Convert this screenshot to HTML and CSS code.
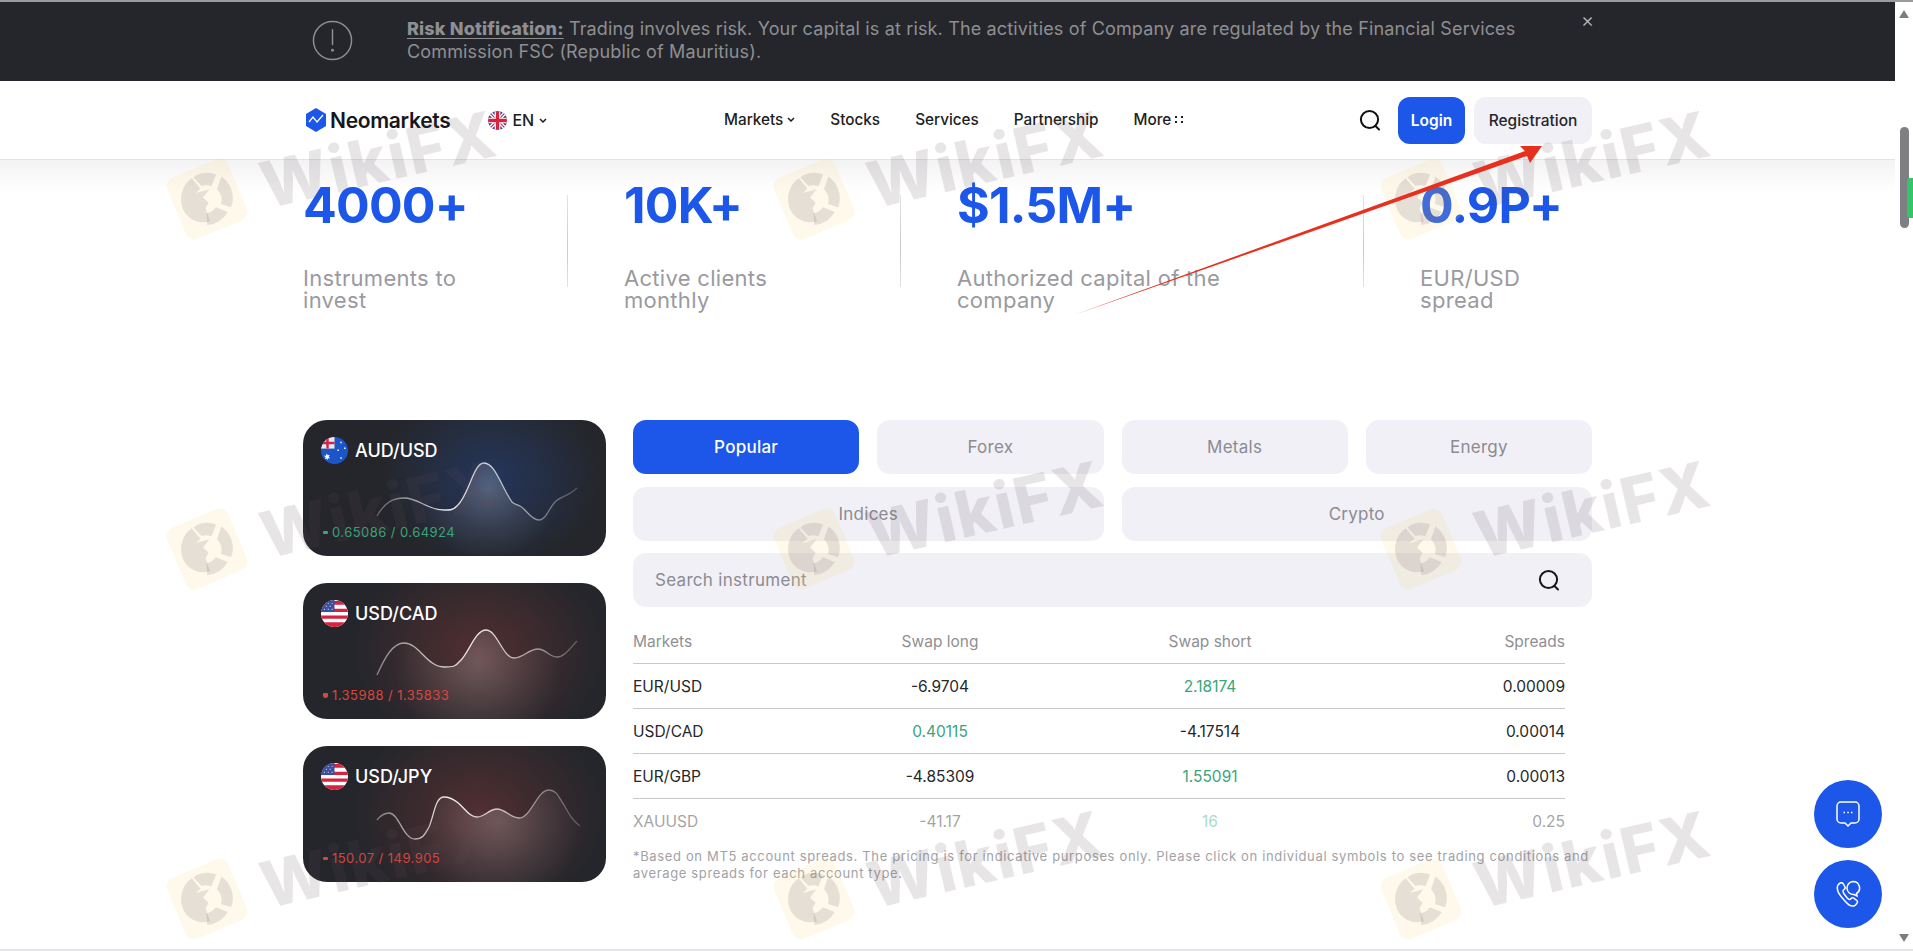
FILE: index.html
```html
<!DOCTYPE html>
<html lang="en">
<head>
<meta charset="utf-8">
<title>Neomarkets</title>
<link rel="stylesheet" href="styles.css">
</head>
<body>
<svg class="defs" width="0" height="0" aria-hidden="true">
  <symbol id="wm-mark" viewBox="0 0 80 80">
    <g transform="rotate(-10 40 40)">
      <rect x="7" y="7" width="66" height="66" rx="9" fill="#f8dc84" opacity=".17"/>
      <path d="M40 14a26 26 0 0 1 18 7l-9 9a14 14 0 0 0-9-4l-4-11zM62 25a26 26 0 0 1-3 32l-8-7a15 15 0 0 0 2-15zM54 60a26 26 0 0 1-24 4l4-11a15 15 0 0 0 11-2z" fill="#6e5f6e" opacity=".17"/>
      <path d="M34 15l4 13 -6 2 14 2 -9 5 3 7-5 4-1 14C22 60 14 50 14 40c0-12 9-23 20-25z" fill="#6e5f6e" opacity=".17"/>
    </g>
  </symbol>
  <symbol id="i-search" viewBox="0 0 22 22">
    <circle cx="10.5" cy="10.5" r="8.6" fill="none" stroke="currentColor" stroke-width="2"/>
    <path d="M16.5 17l3.5 3.5" fill="none" stroke="currentColor" stroke-width="2" stroke-linecap="round"/>
  </symbol>
  <symbol id="flag-us" viewBox="0 0 28 28">
    <rect width="28" height="28" fill="#fff"/>
    <path d="M0 1h28v4H0zM0 9h28v3.500H0zM0 16h28v3.500H0zM0 23h28v5H0z" fill="#d8233f"/>
    <rect width="14" height="12.500" fill="#3c4f9c"/>
    <path d="M3 3h1v1H3zM7 3h1v1H7zM11 3h1v1h-1zM5 6h1v1H5zM9 6h1v1H9zM3 9h1v1H3zM7 9h1v1H7zM11 9h1v1h-1z" fill="#fff"/>
  </symbol>
</svg>

<div class="page">
  <div class="main">
    <section class="banner">
      <div class="banner-inner">
        <svg class="alert-icon" viewBox="0 0 42 42"><circle cx="21" cy="21" r="19.500" fill="none" stroke="#8e8f92" stroke-width="1.500"/><path d="M21 10v15" stroke="#8e8f92" stroke-width="1.500" stroke-linecap="round"/><circle cx="21" cy="31" r="1.500" fill="#8e8f92"/></svg>
        <p class="banner-text"><strong>Risk Notification:</strong> Trading involves risk. Your capital is at risk. The activities of Company are regulated by the Financial Services Commission FSC (Republic of Mauritius).</p>
        <span class="banner-close">×</span>
      </div>
    </section>

    <header class="site-header">
      <div class="header-inner">
        <div class="brand-group">
          <a class="brand">
            <svg class="brand-mark" viewBox="0 0 20 24"><path d="M10 0l10 6v12l-10 6L0 18V6z" fill="#1c57ea"/><path d="M3 14l4-5 4 5 6-7" fill="none" stroke="#fff" stroke-width="1.300"/></svg>
            <span>Neomarkets</span>
          </a>
          <span class="lang">
            <svg class="flag-sm" viewBox="0 0 20 20"><rect width="20" height="20" fill="#2b3f8c"/><path d="M0 0l20 20M20 0L0 20" stroke="#fff" stroke-width="4"/><path d="M0 0l20 20M20 0L0 20" stroke="#d8233f" stroke-width="1.300"/><path d="M10 0v20M0 10h20" stroke="#fff" stroke-width="6"/><path d="M10 0v20M0 10h20" stroke="#d8233f" stroke-width="3.500"/></svg>
            EN
            <svg class="chev" viewBox="0 0 8 5"><path d="M1 1l3 3 3-3" fill="none" stroke="currentColor" stroke-width="1.500"/></svg>
          </span>
        </div>
        <nav class="nav">
          <a>Markets <svg class="chev" viewBox="0 0 8 5"><path d="M1 1l3 3 3-3" fill="none" stroke="currentColor" stroke-width="1.500"/></svg></a>
          <a>Stocks</a>
          <a>Services</a>
          <a>Partnership</a>
          <a>More <svg class="dots" viewBox="0 0 9 9"><path d="M0 1h2v2H0zM0 6h2v2H0zM6 1h2v2H6zM6 6h2v2H6z" fill="currentColor"/></svg></a>
        </nav>
        <div class="header-actions">
          <svg class="header-search"><use href="#i-search"/></svg>
          <button class="btn btn-primary">Login</button>
          <button class="btn btn-soft">Registration</button>
        </div>
      </div>
    </header>

    <section class="stats">
      <div class="stat stat-a"><div class="stat-value">4000+</div><div class="stat-label">Instruments to<br>invest</div></div>
      <i class="stat-rule"></i>
      <div class="stat stat-b"><div class="stat-value">10K+</div><div class="stat-label">Active clients<br>monthly</div></div>
      <i class="stat-rule"></i>
      <div class="stat stat-c"><div class="stat-value">$1.5M+</div><div class="stat-label">Authorized capital of the<br>company</div></div>
      <i class="stat-rule"></i>
      <div class="stat"><div class="stat-value">0.9P+</div><div class="stat-label">EUR/USD<br>spread</div></div>
    </section>

    <section class="markets">
      <div class="cards">
        <article class="card card-blue">
          <svg class="chart" viewBox="0 0 303 136">
            <defs>
              <radialGradient id="area-a" gradientUnits="userSpaceOnUse" cx="185" cy="68" r="72"><stop offset="0" stop-color="#fff" stop-opacity=".22"/><stop offset=".55" stop-color="#fff" stop-opacity=".08"/><stop offset="1" stop-color="#fff" stop-opacity="0"/></radialGradient>
              <linearGradient id="line-a" x1="0" y1="0" x2="1" y2="0"><stop offset="0" stop-color="#fff" stop-opacity=".3"/><stop offset=".4" stop-color="#fff" stop-opacity=".95"/><stop offset="1" stop-color="#fff" stop-opacity=".2"/></linearGradient>
            </defs>
            <path d="M74 96C82 82 90 78 101 78C116 78 124 90 141 90C148 90 150 90 154 86C166 76 170 43 181 43C192 43 198 66 209 82C212 85 214 84 217 86C224 90 228 100 236 100C243 100 246 88 252 82C258 76 266 76 274 68V136H74Z" fill="url(#area-a)"/>
            <path d="M74 96C82 82 90 78 101 78C116 78 124 90 141 90C148 90 150 90 154 86C166 76 170 43 181 43C192 43 198 66 209 82C212 85 214 84 217 86C224 90 228 100 236 100C243 100 246 88 252 82C258 76 266 76 274 68" fill="none" stroke="url(#line-a)" stroke-width="1.300"/>
          </svg>
          <div class="card-head">
            <svg class="flag" viewBox="0 0 28 28"><rect width="28" height="28" fill="#1c55c8"/><rect width="14" height="12" fill="#e8e8f0"/><path d="M0 5h14v2.500H0zM5.500 0H8v12H5.500z" fill="#d8233f"/><path d="M6 17l1 2 2-.5-1 2 1.500 1.500-2.300 0L7 24l-1-1.800-2 .8.800-2L3 19.500l2 0z" fill="#fff"/><path d="M20 5h1.500v1.500H20zM24 11h1.500v1.500H24zM17 13h1.500v1.500H17zM20 21h1.500v1.500H20z" fill="#fff"/></svg>
            <h3>AUD/USD</h3>
          </div>
          <div class="card-price price-up"><i class="mark"></i>0.65086 / 0.64924</div>
        </article>
        <article class="card card-red">
          <svg class="chart" viewBox="0 0 303 136">
            <defs>
              <radialGradient id="area-b" gradientUnits="userSpaceOnUse" cx="175" cy="80" r="85"><stop offset="0" stop-color="#fff" stop-opacity=".2"/><stop offset=".55" stop-color="#fff" stop-opacity=".08"/><stop offset="1" stop-color="#fff" stop-opacity="0"/></radialGradient>
              <linearGradient id="line-b" x1="0" y1="0" x2="1" y2="0"><stop offset="0" stop-color="#fff" stop-opacity=".45"/><stop offset=".5" stop-color="#fff" stop-opacity=".9"/><stop offset="1" stop-color="#fff" stop-opacity=".25"/></linearGradient>
            </defs>
            <path d="M74 92C82 74 90 60 101 60C116 60 124 84 141 84C150 84 152 84 157 78C166 70 172 47 183 47C194 47 200 75 211 75C220 75 226 66 235 66C243 66 246 74 254 74C262 74 268 64 274 58V136H74Z" fill="url(#area-b)"/>
            <path d="M74 92C82 74 90 60 101 60C116 60 124 84 141 84C150 84 152 84 157 78C166 70 172 47 183 47C194 47 200 75 211 75C220 75 226 66 235 66C243 66 246 74 254 74C262 74 268 64 274 58" fill="none" stroke="url(#line-b)" stroke-width="1.300"/>
          </svg>
          <div class="card-head">
            <svg class="flag"><use href="#flag-us"/></svg>
            <h3>USD/CAD</h3>
          </div>
          <div class="card-price price-down"><i class="mark mark-drop"></i>1.35988 / 1.35833</div>
        </article>
        <article class="card card-red">
          <svg class="chart" viewBox="0 0 303 136">
            <defs>
              <radialGradient id="area-c" gradientUnits="userSpaceOnUse" cx="195" cy="75" r="85"><stop offset="0" stop-color="#fff" stop-opacity=".2"/><stop offset=".55" stop-color="#fff" stop-opacity=".08"/><stop offset="1" stop-color="#fff" stop-opacity="0"/></radialGradient>
              <linearGradient id="line-c" x1="0" y1="0" x2="1" y2="0"><stop offset="0" stop-color="#fff" stop-opacity=".4"/><stop offset=".4" stop-color="#fff" stop-opacity=".95"/><stop offset="1" stop-color="#fff" stop-opacity=".2"/></linearGradient>
            </defs>
            <path d="M74 74C78 69 82 67 86 67C96 67 100 93 112 93C120 93 122 88 126 81C131 70 132 51 141 51C147 51 150 53 154 56C162 62 166 71 174 71C182 71 186 63 194 63C202 63 208 72 216 72C228 72 234 44 246 44C254 44 256 52 261 59C266 68 270 75 277 80V136H74Z" fill="url(#area-c)"/>
            <path d="M74 74C78 69 82 67 86 67C96 67 100 93 112 93C120 93 122 88 126 81C131 70 132 51 141 51C147 51 150 53 154 56C162 62 166 71 174 71C182 71 186 63 194 63C202 63 208 72 216 72C228 72 234 44 246 44C254 44 256 52 261 59C266 68 270 75 277 80" fill="none" stroke="url(#line-c)" stroke-width="1.300"/>
          </svg>
          <div class="card-head">
            <svg class="flag"><use href="#flag-us"/></svg>
            <h3>USD/JPY</h3>
          </div>
          <div class="card-price price-down"><i class="mark"></i>150.07 / 149.905</div>
        </article>
      </div>

      <div class="panel">
        <div class="tabs">
          <button class="tab tab-active">Popular</button>
          <button class="tab">Forex</button>
          <button class="tab">Metals</button>
          <button class="tab">Energy</button>
          <button class="tab tab-wide">Indices</button>
          <button class="tab tab-wide">Crypto</button>
        </div>
        <div class="search">
          <span>Search instrument</span>
          <svg class="search-icon"><use href="#i-search"/></svg>
        </div>
        <div class="table-wrap">
          <div class="table">
            <div class="row row-head"><span>Markets</span><span>Swap long</span><span>Swap short</span><span>Spreads</span></div>
            <div class="row"><span>EUR/USD</span><span>-6.9704</span><span class="pos">2.18174</span><span>0.00009</span></div>
            <div class="row"><span>USD/CAD</span><span class="pos">0.40115</span><span>-4.17514</span><span>0.00014</span></div>
            <div class="row"><span>EUR/GBP</span><span>-4.85309</span><span class="pos">1.55091</span><span>0.00013</span></div>
            <div class="row row-fade"><span>XAUUSD</span><span>-41.17</span><span class="pos">16</span><span>0.25</span></div>
          </div>
          <i class="table-scroll"></i>
        </div>
        <p class="footnote">*Based on MT5 account spreads. The pricing is for indicative purposes only. Please click on individual symbols to see trading conditions and average spreads for each account type.</p>
      </div>
    </section>
  </div>

  <aside class="scrollbar">
    <i class="sb-up"></i>
    <i class="sb-thumb"></i>
    <i class="sb-mark"></i>
    <i class="sb-down"></i>
  </aside>

  <div class="watermarks" aria-hidden="true">
    <div class="wm"><svg class="wm-logo"><use href="#wm-mark"/></svg><span>WikiFX</span></div>
    <div class="wm"><svg class="wm-logo"><use href="#wm-mark"/></svg><span>WikiFX</span></div>
    <div class="wm"><svg class="wm-logo"><use href="#wm-mark"/></svg><span>WikiFX</span></div>
    <div class="wm"><svg class="wm-logo"><use href="#wm-mark"/></svg><span>WikiFX</span></div>
    <div class="wm"><svg class="wm-logo"><use href="#wm-mark"/></svg><span>WikiFX</span></div>
    <div class="wm"><svg class="wm-logo"><use href="#wm-mark"/></svg><span>WikiFX</span></div>
    <div class="wm"><svg class="wm-logo"><use href="#wm-mark"/></svg><span>WikiFX</span></div>
    <div class="wm"><svg class="wm-logo"><use href="#wm-mark"/></svg><span>WikiFX</span></div>
    <div class="wm"><svg class="wm-logo"><use href="#wm-mark"/></svg><span>WikiFX</span></div>
  </div>

  <svg class="arrow" viewBox="0 0 1913 951"><polygon points="1074,315 1525,151 1520,146 1542,146 1530,163 1527,156" fill="#e8301f"/></svg>

  <div class="floating">
    <button class="fab">
      <svg viewBox="0 0 26 28" class="fab-icon"><path d="M6 2h14a4 4 0 0 1 4 4v13a4 4 0 0 1-4 4h-4l-3 3-3-3H6a4 4 0 0 1-4-4V6a4 4 0 0 1 4-4z" fill="none" stroke="#fff" stroke-width="1.500"/><path d="M8.500 12.500h1.500M12.300 12.500h1.500M16 12.500h1.500" stroke="#fff" stroke-width="1.500"/></svg>
    </button>
    <button class="fab">
      <svg viewBox="0 0 26 28" class="fab-icon"><path d="M3 5c2-2.500 4-3 5-1.500l2 3.500c.7 1.300-.3 2.200-1.500 3-.8.600-.5 2 .5 3.800l3 4c1.300 1.500 2.500 2 3.400 1.300 1.100-1 2.100-1.800 3.400-1l3 2.400c1.300 1.100.8 2.800-1.800 4.800-2.200 1.500-6 .6-10.500-4.800C3.500 14.500 1.200 8.500 3 5z" fill="none" stroke="#fff" stroke-width="1.500"/><path d="M18 1.500a6.500 6.500 0 0 1 3.500 12l.5 2.500-3-1.500a6.500 6.500 0 0 1-1-13z" fill="none" stroke="#fff" stroke-width="1.500"/></svg>
    </button>
  </div>
</div>
</body>
</html>
```
FILE: styles.css
```css
* { box-sizing: border-box; }
html, body { margin: 0; height: 951px; overflow: hidden; background: #fff; }
body { font-family: Inter, "Open Sans", "Liberation Sans", sans-serif; color: #1d1e22; }
.defs { position: absolute; }
button { font-family: inherit; border: 0; cursor: pointer; }
p, h3 { margin: 0; }

.page { position: relative; display: flex; width: 1913px; height: 951px; border-top: 2px solid #9a9b9e; border-bottom: 2px solid #e4e4e6; overflow: hidden; }
.main { width: 1895px; flex: none; }

/* Banner */
.banner { height: 79px; background: #25262b; }
.banner-inner { width: 1289px; height: 100%; margin: 0 auto; display: flex; align-items: flex-start; padding: 18px 0 0 9px; }
.alert-icon { width: 41px; height: 41px; flex: none; margin-right: 54px; }
.banner-text { width: 1130px; flex: none; margin-top: -3px; font-size: 18px; line-height: 23px; letter-spacing: .155px; color: #8e8f92; }
.banner-text strong { font-weight: 800; text-decoration: underline; text-underline-offset: 3px; text-decoration-thickness: 1px; }
.banner-close { margin-left: 44px; margin-top: -12px; font-size: 20px; line-height: 24px; color: #b9babc; font-weight: 300; }

/* Header */
.site-header { height: 79px; background: #fff; border-bottom: 1px solid #e3e3e5; }
.header-inner { width: 1289px; height: 100%; margin: 0 auto; display: flex; align-items: center; }
.brand-group { width: 421px; flex: none; display: flex; align-items: center; padding-left: 3px; }
.brand { display: flex; align-items: center; gap: 4px; font-size: 21px; font-weight: 600; letter-spacing: -.3px; color: #16171b; }
.brand-mark { width: 20px; height: 24px; }
.lang { display: flex; align-items: center; gap: 5px; margin-left: 38px; font-size: 16px; font-weight: 500; }
.flag-sm { width: 19px; height: 19px; border-radius: 50%; }
.chev { width: 8px; height: 5px; }
.nav { display: flex; gap: 35px; margin-top: -2px; font-size: 15.300px; font-weight: 500; color: #1d1e22; }
.nav a { display: flex; align-items: center; gap: 4px; white-space: nowrap; }
.dots { width: 9px; height: 9px; }
.header-actions { margin-left: auto; display: flex; align-items: center; }
.header-search { width: 22px; height: 22px; margin-right: 17px; color: #111; }
.btn { height: 47px; border-radius: 12px; font-size: 15.500px; font-weight: 500; }
.btn-primary { width: 67px; margin-right: 9px; background: #1c57ea; color: #fff; font-weight: 600; }
.btn-soft { width: 118px; background: #f0f0f6; color: #26272b; }

/* Stats */
.stats { display: flex; align-items: flex-start; height: 260px; padding: 20px 0 0 303px; background: linear-gradient(#f3f3f4, #fff 32px); }
.stat { flex: none; }
.stat-a { width: 264px; }
.stat-b { width: 276px; }
.stat-c { width: 406px; }
.stat-value { font-size: 50px; line-height: 50px; font-weight: 700; color: #1c57ea; letter-spacing: -.8px; }
.stat-label { margin-top: 37px; font-size: 22px; line-height: 22px; color: #9a9a9f; letter-spacing: .3px; }
.stat-rule { flex: none; width: 1px; height: 92px; margin: 15px 56px 0 0; background: linear-gradient(#e4e4e6, #c9c9cc 60%, #e4e4e6); }

/* Markets */
.markets { display: flex; gap: 27px; width: 1289px; margin: 0 auto; }
.cards { width: 303px; flex: none; display: flex; flex-direction: column; gap: 27px; }
.card { position: relative; height: 136px; border-radius: 24px; padding: 17px 18px 14px; display: flex; flex-direction: column; justify-content: space-between; overflow: hidden; background-color: #25262b; }
.card-blue { background-image: radial-gradient(ellipse 110px 90px at 62% 42%, rgba(35,70,140,.5), rgba(35,70,140,0)); }
.card-red { background-image: radial-gradient(ellipse 125px 100px at 58% 50%, rgba(125,55,55,.5), rgba(125,55,55,0)); }
.chart { position: absolute; left: 0; top: 0; width: 303px; height: 136px; }
.card-head { position: relative; display: flex; align-items: center; gap: 7px; }
.flag { width: 27px; height: 27px; border-radius: 50%; flex: none; }
.card-head h3 { font-size: 18px; font-weight: 500; color: #fff; }
.card-price { position: relative; display: flex; align-items: center; padding-left: 2px; font-size: 13px; line-height: 20px; letter-spacing: .45px; }
.mark { width: 5px; height: 3px; margin-right: 4px; background: currentColor; border-radius: 1px; }
.mark-drop { height: 5px; border-radius: 1px 1px 3px 3px; }
.price-up { color: #3aa57a; }
.price-down { color: #d8473e; }

.panel { flex: 1; min-width: 0; }
.tabs { display: grid; grid-template-columns: repeat(4, 1fr); gap: 13px 18px; }
.tab { height: 54px; border-radius: 13px; background: #f0f0f6; color: #8b8b92; font-size: 17px; letter-spacing: .25px; }
.tab-wide { grid-column: span 2; }
.tab-active { background: #1c57ea; color: #fff; font-weight: 500; }
.search { height: 54px; margin-top: 12px; padding: 0 32px 0 22px; border-radius: 13px; background: #f0f0f6; display: flex; align-items: center; justify-content: space-between; color: #8b8b92; font-size: 17px; letter-spacing: .3px; }
.search-icon { width: 22px; height: 22px; color: #15161a; }

.table-wrap { display: flex; align-items: flex-start; gap: 28px; }
.table { width: 932px; flex: none; font-size: 15.500px; }
.row { display: grid; grid-template-columns: 172px 270px 270px 220px; align-items: center; height: 45px; border-bottom: 1px solid #c8c8ca; color: #26272b; }
.row span:nth-child(2), .row span:nth-child(3) { text-align: center; }
.row span:nth-child(4) { text-align: right; }
.row-head { height: 57px; padding-top: 12px; color: #8f8f94; }
.row-fade { border-bottom: 0; opacity: .42; }
.pos { color: #3aa57a; }
.table-scroll { width: 3px; height: 102px; margin-top: 57px; background: #e3e3e5; }
.footnote { margin-top: 4px; font-size: 13px; line-height: 17px; letter-spacing: .65px; color: #a2a2a6; }

/* Browser scrollbar */
.scrollbar { position: relative; flex: 1; display: flex; flex-direction: column; align-items: center; background: #fff; }
.sb-up { width: 0; height: 0; margin-top: 8px; border: 5px solid transparent; border-top: 0; border-bottom: 8px solid #7d7d80; }
.sb-thumb { width: 9px; height: 101px; margin-top: 109px; border-radius: 5px; background: #7e7f82; }
.sb-mark { position: absolute; top: 176px; right: 0; width: 6px; height: 40px; border-radius: 3px 0 0 3px; background: #36c46b; }
.sb-down { width: 0; height: 0; margin-top: auto; margin-bottom: 7px; border: 5px solid transparent; border-bottom: 0; border-top: 8px solid #7d7d80; }

/* WikiFX overlay */
.watermarks { position: absolute; inset: 0; pointer-events: none; display: grid; grid-template-columns: repeat(3, 607px); grid-auto-rows: 350px; padding: 157px 0 0 167px; }
.wm { display: flex; align-items: center; height: 80px; transform: rotate(-13deg); transform-origin: 40px 40px; }
.wm-logo { width: 80px; height: 80px; flex: none; }
.wm span { margin-left: 16px; font-size: 64px; line-height: 80px; font-weight: 800; letter-spacing: 2px; color: rgba(95, 78, 88, .145); }

.arrow { position: absolute; left: 0; top: -2px; width: 1913px; height: 951px; pointer-events: none; }

.floating { position: absolute; right: 31px; bottom: 21px; display: flex; flex-direction: column; gap: 12px; }
.fab { width: 68px; height: 68px; padding: 0; border-radius: 50%; background: #1c57ea; display: flex; align-items: center; justify-content: center; }
.fab-icon { width: 26px; height: 28px; }
```
